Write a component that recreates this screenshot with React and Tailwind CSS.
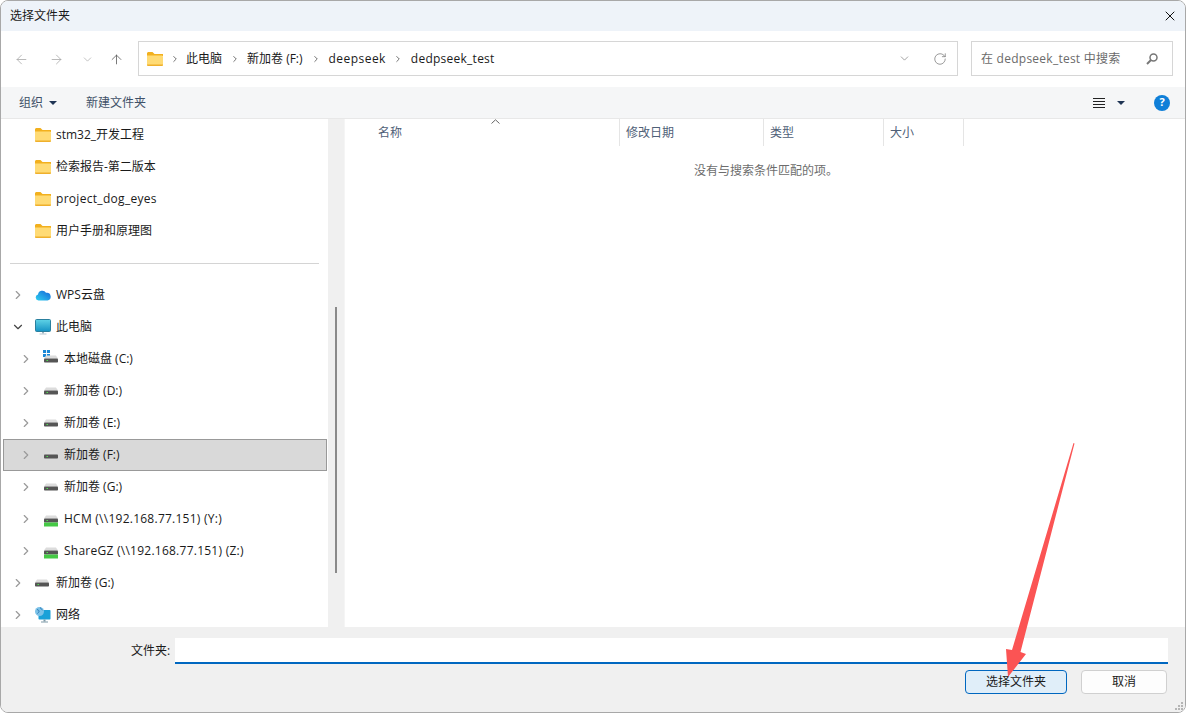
import { ArrowLeft, ArrowRight, ArrowUp, ChevronDown, ChevronRight, RotateCw, X } from 'lucide-react'

const Folder = () => (
  <svg width="16" height="14" viewBox="0 0 16 14">
    <path d="M0 1.500C0 .7.7 0 1.500 0h4L7.500 2H16v2H0z" fill="#f2b01e" />
    <path d="M0 3.500h14.500c.8 0 1.500.7 1.500 1.500v7.500c0 .8-.7 1.500-1.500 1.500h-13C.7 14 0 13.300 0 12.500z" fill="#ffdb75" />
    <path d="M0 12.500h16v.2c0 .7-.6 1.300-1.300 1.300H1.300C.6 14 0 13.400 0 12.700z" fill="#efb02c" />
  </svg>
)

const Drive = ({ net, win }) => (
  <span className="relative block w-[16px] h-[16px]">
    {win && (
      <svg className="absolute left-[-1px] top-[-1px]" width="7" height="7" viewBox="0 0 8 8">
        <path d="M0 0h3.500v3.500H0zM4.500 0H8v3.500H4.500zM0 4.500h3.500V8H0zM4.500 4.500H8V8H4.500z" fill="#1b87d6" />
      </svg>
    )}
    <svg className="absolute left-0 top-0" width="16" height="16" viewBox="0 0 16 16">
      <path d="M2 4.500h10l2 3H0z" fill="#dcdcdc" />
      <rect x="0" y="7.500" width="14" height="4" rx="0.800" fill="#555" />
      <rect x="2.500" y="9" width="1.500" height="1" fill="#4fe04f" />
      {net && <rect x="0" y="11.500" width="14" height="4" fill="#45c945" />}
    </svg>
  </span>
)

const Cloud = () => (
  <svg width="16" height="14" viewBox="0 0 16 14">
    <defs>
      <linearGradient id="cl" x1="0" y1="1" x2="1" y2="0">
        <stop offset="0" stopColor="#2fd0f0" />
        <stop offset="1" stopColor="#1565d8" />
      </linearGradient>
    </defs>
    <path d="M3.500 12.500A3 3 0 0 1 3 6.600 4.300 4.300 0 0 1 11 4.800a3.900 3.900 0 0 1 1.500 7.700z" fill="url(#cl)" />
  </svg>
)

const Monitor = () => (
  <svg width="16" height="16" viewBox="0 0 16 16">
    <defs>
      <linearGradient id="mo" x1="0" y1="0" x2="0" y2="1">
        <stop offset="0" stopColor="#5fd3e6" />
        <stop offset="1" stopColor="#1592c4" />
      </linearGradient>
    </defs>
    <rect x="0.500" y="0.500" width="15" height="12" rx="1" fill="url(#mo)" stroke="#2a7f9e" />
    <rect x="7" y="13" width="2" height="1.500" fill="#9db4c0" />
    <rect x="4.500" y="14.500" width="7" height="1" fill="#b6c6cf" />
  </svg>
)

const Network = () => (
  <svg width="16" height="16" viewBox="0 0 16 16">
    <rect x="3.500" y="3" width="12" height="9.500" rx="0.800" fill="#1ba1d8" />
    <rect x="8.500" y="12.500" width="2" height="2" fill="#7f9aa8" />
    <rect x="6" y="14.500" width="7" height="1" fill="#7f9aa8" />
    <circle cx="4.500" cy="4.500" r="4.500" fill="#7cc2e8" />
    <path d="M2 2.500c1.500.5 2 1 2 2s-1 1-1.500 2M5.500.500c0 1.500 1 1.500 2 2.500" stroke="#2b78b5" fill="none" />
  </svg>
)

const Chevron = ({ open }) =>
  open ? (
    <ChevronDown size={14} strokeWidth={2} className="text-[#444]" />
  ) : (
    <ChevronRight size={14} strokeWidth={2} className="text-[#9a9a9a]" />
  )

const quick = [
  { label: 'stm32_开发工程' },
  { label: '检索报告-第二版本' },
  { label: 'project_dog_eyes', cls: 'tracking-[0.3px]' },
  { label: '用户手册和原理图' },
]

const tree = [
  { label: 'WPS云盘', icon: <Cloud /> },
  { label: '此电脑', icon: <Monitor />, open: true },
  { label: '本地磁盘 (C:)', icon: <Drive win />, sub: true },
  { label: '新加卷 (D:)', icon: <Drive />, sub: true },
  { label: '新加卷 (E:)', icon: <Drive />, sub: true },
  { label: '新加卷 (F:)', icon: <Drive />, sub: true, selected: true },
  { label: '新加卷 (G:)', icon: <Drive />, sub: true },
  { label: 'HCM (\\\\192.168.77.151) (Y:)', icon: <Drive net />, sub: true, cls: 'tracking-[0.25px]' },
  { label: 'ShareGZ (\\\\192.168.77.151) (Z:)', icon: <Drive net />, sub: true, cls: 'tracking-[0.25px]' },
  { label: '新加卷 (G:)', icon: <Drive /> },
  { label: '网络', icon: <Network /> },
]

const crumbs = [
  { label: '此电脑', cls: 'mr-[1px]' },
  { label: '新加卷 (F:)', cls: 'ml-[1px] mr-[2px]' },
  { label: 'deepseek', cls: 'mx-[1px] tracking-[0.45px]' },
  { label: 'dedpseek_test', cls: 'mx-[1px] tracking-[0.25px]' },
]

const columns = [
  { name: '修改日期', cls: 'w-[144px]' },
  { name: '类型', cls: 'w-[120px]' },
  { name: '大小', cls: 'w-[80px]' },
]

export default function App() {
  return (
    <div
      className="relative w-[1186px] h-[713px] flex flex-col overflow-hidden bg-white border border-[#a8a8a8] rounded-lg text-[12px] text-[#1a1a1a]"
      style={{ fontFamily: '"Open Sans", "Noto Sans CJK SC", sans-serif' }}
    >
      {/* title bar */}
      <div className="h-[30px] shrink-0 flex items-center justify-between bg-[#eef3f9] pl-[9px] pr-[7px]">
        <span>选择文件夹</span>
        <X size={16} strokeWidth={1.5} className="text-[#111]" />
      </div>

      {/* nav row */}
      <div className="h-[56px] shrink-0 flex items-center pl-[13px] pr-[12px]">
        <ArrowLeft size={15} strokeWidth={1.25} className="text-[#a6a6a6]" />
        <ArrowRight size={15} strokeWidth={1.25} className="text-[#a6a6a6] ml-[20px]" />
        <ChevronDown size={13} strokeWidth={1.25} className="text-[#a6a6a6] ml-[17px]" />
        <ArrowUp size={15} strokeWidth={1.25} className="text-[#555] ml-[15px]" />
        <div className="w-[820px] h-[35px] ml-[14px] mb-[1px] flex items-center border border-[#d6d6d6] pl-[8px] pr-[10px]">
          <Folder />
          {crumbs.map((c) => (
            <div key={c.label} className="flex items-center">
              <ChevronRight size={10} strokeWidth={2} className="text-[#555] mx-[6.5px]" />
              <span className={c.cls}>{c.label}</span>
            </div>
          ))}
          <ChevronDown size={13} strokeWidth={1.25} className="text-[#777] ml-auto" />
          <RotateCw size={14} strokeWidth={1.25} className="text-[#777] ml-[22px]" />
        </div>
        <div className="w-[202px] h-[35px] ml-[13px] mb-[1px] flex items-center justify-between border border-[#d6d6d6] pl-[9px] pr-[14px] text-[#6b6b6b]">
          <span className="tracking-[0.25px]">在 dedpseek_test 中搜索</span>
          <svg width="12" height="12" viewBox="0 0 12 12" fill="none" stroke="#777" strokeWidth="1.500">
            <circle cx="7.500" cy="4.500" r="3.500" />
            <path d="M5 7 1 11" strokeWidth="2" />
          </svg>
        </div>
      </div>

      {/* toolbar */}
      <div className="h-[32px] shrink-0 flex items-center bg-[#f5f6f7] border-b border-[#e8e8e8] pl-[18px] pr-[15px] text-[#3f5168]">
        <span>组织</span>
        <span className="ml-[6px] w-0 h-0 border-x-[4px] border-x-transparent border-t-[4px] border-t-[#1f3454]" />
        <span className="ml-[29px]">新建文件夹</span>
        <svg className="ml-auto" width="12" height="10" viewBox="0 0 12 10" stroke="#222">
          <path d="M0 .5h12M0 3.500h12M0 6.500h12M0 9.500h12" />
        </svg>
        <span className="ml-[12px] w-0 h-0 border-x-[4px] border-x-transparent border-t-[4px] border-t-[#1f3454]" />
        <span className="ml-[29px] w-[16px] h-[16px] rounded-full bg-[#0f7fd8] text-white text-[11px] font-bold flex items-center justify-center">
          ?
        </span>
      </div>

      {/* body */}
      <div className="flex-1 min-h-0 flex">
        <div className="w-[327px] shrink-0 overflow-hidden">
          {quick.map((q) => (
            <div key={q.label} className="h-[32px] flex items-center pl-[34px]">
              <Folder />
              <span className={`ml-[5px] ${q.cls || ''}`}>{q.label}</span>
            </div>
          ))}
          <div className="h-[32px] flex items-center pl-[9px] pr-[9px]">
            <div className="w-full h-px bg-[#d4d4d4]" />
          </div>
          {tree.map((t, i) => (
            <div
              key={i}
              className={`h-[32px] flex items-center ml-[2px] mr-[1px] border ${t.sub ? 'pl-[15px]' : 'pl-[7px]'} ${
                t.selected ? 'bg-[#d9d9d9] border-[#999]' : 'border-transparent'
              }`}
            >
              <Chevron open={t.open} />
              <span className={t.sub ? 'ml-[11px]' : 'ml-[10px]'}>{t.icon}</span>
              <span className={`${t.sub ? 'ml-[4px]' : 'ml-[5px]'} ${t.cls || ''}`}>{t.label}</span>
            </div>
          ))}
        </div>

        {/* sidebar scrollbar */}
        <div className="w-[16px] shrink-0 bg-[#f0f0f0] pt-[188px] pl-[7px]">
          <div className="w-[2px] h-[266px] bg-[#8a8a8a]" />
        </div>

        {/* file list */}
        <div className="flex-1 min-w-0 border-l border-[#f5f5f5]">
          <div className="h-[27px] flex text-[#4f6077]">
            <div className="relative w-[275px] pl-[33px] flex items-center border-r border-[#e5e5e5]">
              名称
              <svg className="absolute left-[146px] top-0" width="9" height="5" viewBox="0 0 9 5" fill="none" stroke="#666">
                <path d="M.5 4.500 4.500.8l4 3.700" />
              </svg>
            </div>
            {columns.map((c) => (
              <div key={c.name} className={`${c.cls} pl-[6px] flex items-center border-r border-[#e5e5e5]`}>
                {c.name}
              </div>
            ))}
          </div>
          <div className="mt-[16px] pl-[2px] text-center text-[#6d6d6d]">没有与搜索条件匹配的项。</div>
        </div>
      </div>

      {/* bottom bar */}
      <div className="h-[85px] shrink-0 bg-[#f0f0f0] relative">
        <div className="flex items-center mt-[11px] pr-[17px]">
          <span className="ml-[130px] w-[44px]">文件夹:</span>
          <div className="flex-1 h-[26px] bg-white border-b-2 border-[#0067c0]" />
        </div>
        <div className="flex justify-end gap-[14px] mt-[6px] pr-[18px]">
          <button className="w-[102px] h-[24px] rounded-[4px] bg-[#e0eef9] border border-[#0067c0]">选择文件夹</button>
          <button className="w-[86px] h-[24px] rounded-[4px] bg-[#fdfdfd] border border-[#d0d0d0]">取消</button>
        </div>
        <svg className="absolute right-[1px] bottom-[1px]" width="10" height="10" viewBox="0 0 10 10" fill="#b5b5b5">
          <path d="M7 1h2v2H7zM4 4h2v2H4zM7 4h2v2H7zM1 7h2v2H1zM4 7h2v2H4zM7 7h2v2H7z" />
        </svg>
      </div>

      {/* red annotation arrow */}
      <svg className="absolute left-[-1px] top-[-1px] pointer-events-none" width="1186" height="713" viewBox="0 0 1186 713">
        <path d="M1073.500 443 1074.500 443.500 1020.500 652 1026 654 1008 677 1006 649 1012 650z" fill="#fb5454" />
      </svg>
    </div>
  )
}
